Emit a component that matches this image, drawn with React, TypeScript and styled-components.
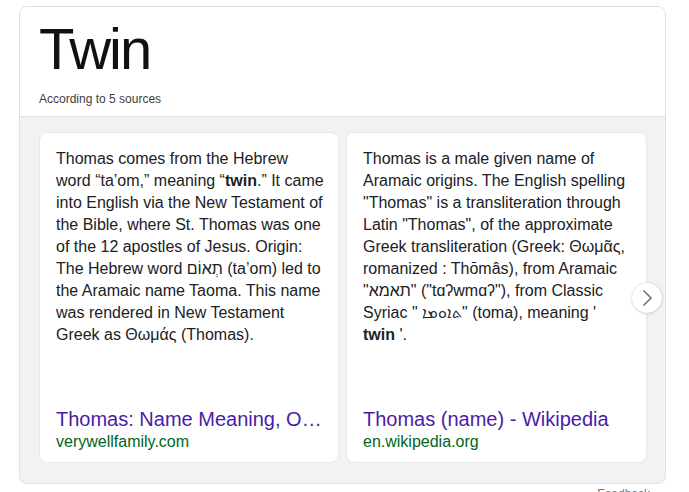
import React from "react";
import styled, { createGlobalStyle } from "styled-components";

const Global = createGlobalStyle`
  html, body { margin: 0; padding: 0; background: #fff; }
  body { font-family: "Liberation Sans", Arial, sans-serif; overflow: hidden; }
`;

const Page = styled.div`
  padding: 6px 0 0 19px;
  width: 647px;
`;

const Panel = styled.div`
  border: 1px solid #dfe1e5;
  border-radius: 8px;
  overflow: hidden;
  background: #f2f2f2;
  box-sizing: border-box;
  height: 478px;
  display: flex;
  flex-direction: column;
`;

const Header = styled.div`
  background: #fff;
  border-bottom: 1px solid #dfe1e5;
  padding: 10px 19px 0;
  height: 99px;
`;

const Title = styled.h1`
  margin: 0;
  font-weight: 400;
  font-size: 58px;
  line-height: 64px;
  color: #111;
  letter-spacing: -2px;
`;

const Sources = styled.div`
  margin-top: 10px;
  font-size: 12px;
  line-height: 16px;
  color: #3c4043;
`;

const Body = styled.div`
  position: relative;
  padding: 15px 19px 0;
  display: grid;
  grid-template-columns: 300px 301px;
  column-gap: 7px;
`;

const Card = styled.div`
  background: #fff;
  border: 1px solid #e8e8e8;
  border-radius: 8px;
  height: 331px;
  box-sizing: border-box;
  padding: 15px 16px 10px 16px;
  display: flex;
  flex-direction: column;
  min-width: 0;
`;

const Snippet = styled.p`
  margin: 0;
  flex: 1;
  font-size: 16px;
  line-height: 22px;
  color: #202124;
`;

const Line = styled.span`
  display: block;
  white-space: nowrap;
`;

const LinkTitle = styled.a`
  display: block;
  font-size: 20px;
  line-height: 26px;
  color: #4a1ca6;
  text-decoration: none;
  white-space: nowrap;
  overflow: hidden;
  text-overflow: ellipsis;
`;

const Domain = styled.div`
  font-size: 16px;
  line-height: 20px;
  color: #006621;
`;

const NextButton = styled.button`
  position: absolute;
  left: 612px;
  top: 166px;
  width: 30px;
  height: 30px;
  border-radius: 50%;
  border: none;
  padding: 0;
  background: #fff;
  box-shadow: 0 0 2px rgba(0,0,0,0.16), 0 1px 3px rgba(0,0,0,0.12);
  display: flex;
  align-items: center;
  justify-content: center;
  cursor: pointer;
`;

const Footer = styled.div`
  display: flex;
  justify-content: flex-end;
  padding: 2px 16px 0 0;
  font-size: 12px;
  line-height: 16px;
  color: #70757a;
`;

const leftLines: React.ReactNode[] = [
  "Thomas comes from the Hebrew",
  <>word “ta’om,” meaning “<b>twin</b>.” It came</>,
  "into English via the New Testament of",
  "the Bible, where St. Thomas was one",
  "of the 12 apostles of Jesus. Origin:",
  "The Hebrew word תְאוֹם (ta’om) led to",
  "the Aramaic name Taoma. This name",
  "was rendered in New Testament",
  "Greek as Θωμάς (Thomas).",
];

const rightLines: React.ReactNode[] = [
  "Thomas is a male given name of",
  "Aramaic origins. The English spelling",
  "\"Thomas\" is a transliteration through",
  "Latin \"Thomas\", of the approximate",
  "Greek transliteration (Greek: Θωμᾶς,",
  "romanized : Thōmâs), from Aramaic",
  "\"תאמא\" (\"tɑʔwmɑʔ\"), from Classic",
  "Syriac \" ܬܐܘܡܐ\" (toma), meaning '",
  <><b>twin</b> '.</>,
];

export default function App() {
  return (
    <>
      <Global />
      <Page>
        <Panel>
          <Header>
            <Title>Twin</Title>
            <Sources>According to 5 sources</Sources>
          </Header>
          <Body>
            <Card>
              <Snippet>
                {leftLines.map((l, i) => (
                  <Line key={i}>{l}</Line>
                ))}
              </Snippet>
              <LinkTitle href="#">Thomas: Name Meaning, Origin, Popularity</LinkTitle>
              <Domain>verywellfamily.com</Domain>
            </Card>
            <Card>
              <Snippet>
                {rightLines.map((l, i) => (
                  <Line key={i}>{l}</Line>
                ))}
              </Snippet>
              <LinkTitle href="#">Thomas (name) - Wikipedia</LinkTitle>
              <Domain>en.wikipedia.org</Domain>
            </Card>
            <NextButton aria-label="Next">
              <svg width="12" height="18" viewBox="0 0 12 18">
                <path d="M2.5 1.5 L10 9 L2.5 16.5" fill="none" stroke="#70757a" strokeWidth="1.6" />
              </svg>
            </NextButton>
          </Body>
        </Panel>
        <Footer>Feedback</Footer>
      </Page>
    </>
  );
}
